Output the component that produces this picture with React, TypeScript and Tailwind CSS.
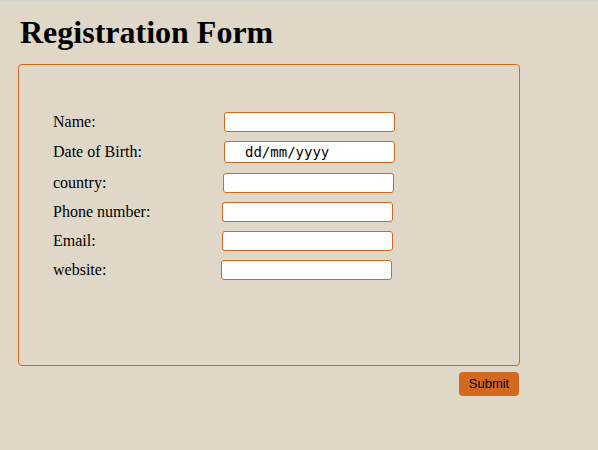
const rows = [
  { label: 'Name:', type: 'text', shift: 'ml-0', h: 'h-[29px]' },
  { label: 'Date of Birth:', type: 'date', shift: 'ml-0', h: 'h-[32px]' },
  { label: 'country:', type: 'text', shift: '-ml-[1px]', h: 'h-[29px]' },
  { label: 'Phone number:', type: 'tel', shift: '-ml-[2px]', h: 'h-[29px]' },
  { label: 'Email:', type: 'email', shift: '-ml-[2px]', h: 'h-[29px]' },
  { label: 'website:', type: 'url', shift: '-ml-[3px]', h: 'h-[29px]' },
];

export default function App() {
  return (
    <div
      className="min-h-[450px] w-full bg-[#dfd8c8] border-t border-[#d3d3d3] pl-[18px]"
      style={{ fontFamily: '"Liberation Serif", "Times New Roman", serif' }}
    >
      <h1 className="pt-[13px] pl-[2px] text-[32px] leading-[37px] font-bold text-black">
        Registration Form
      </h1>
      <form className="mt-[13px]">
        <div className="w-[502px] h-[302px] border border-[#d2691e] rounded-[4px] pl-[34px] pt-[47px]">
          {rows.map((r) => (
            <div key={r.label} className={`flex items-start ${r.h}`}>
              <label className="w-[171px] text-[16px] leading-[18px] text-black flex items-center self-start"
                style={{ height: r.type === 'date' ? 22 : 20 }}>
                {r.label}
              </label>
              {r.type === 'date' ? (
                <div
                  className={`${r.shift} w-[171px] h-[22px] bg-white border border-[#d2691e] rounded-[3px] flex items-center pl-[20px] text-[14px] text-black`}
                  style={{ fontFamily: '"DejaVu Sans Mono", monospace' }}
                >
                  dd/mm/yyyy
                </div>
              ) : (
                <input
                  type={r.type}
                  className={`${r.shift} w-[171px] h-[20px] bg-white border border-[#d2691e] rounded-[3px] outline-none`}
                />
              )}
            </div>
          ))}
        </div>
        <div className="w-[502px] flex justify-end mt-[6px]">
          <button
            type="button"
            className="mr-[1px] w-[60px] h-[24px] bg-[#d2691e] rounded-[4px] text-[13px] text-black"
            style={{ fontFamily: '"Liberation Sans", Arial, sans-serif' }}
          >
            Submit
          </button>
        </div>
      </form>
    </div>
  );
}
